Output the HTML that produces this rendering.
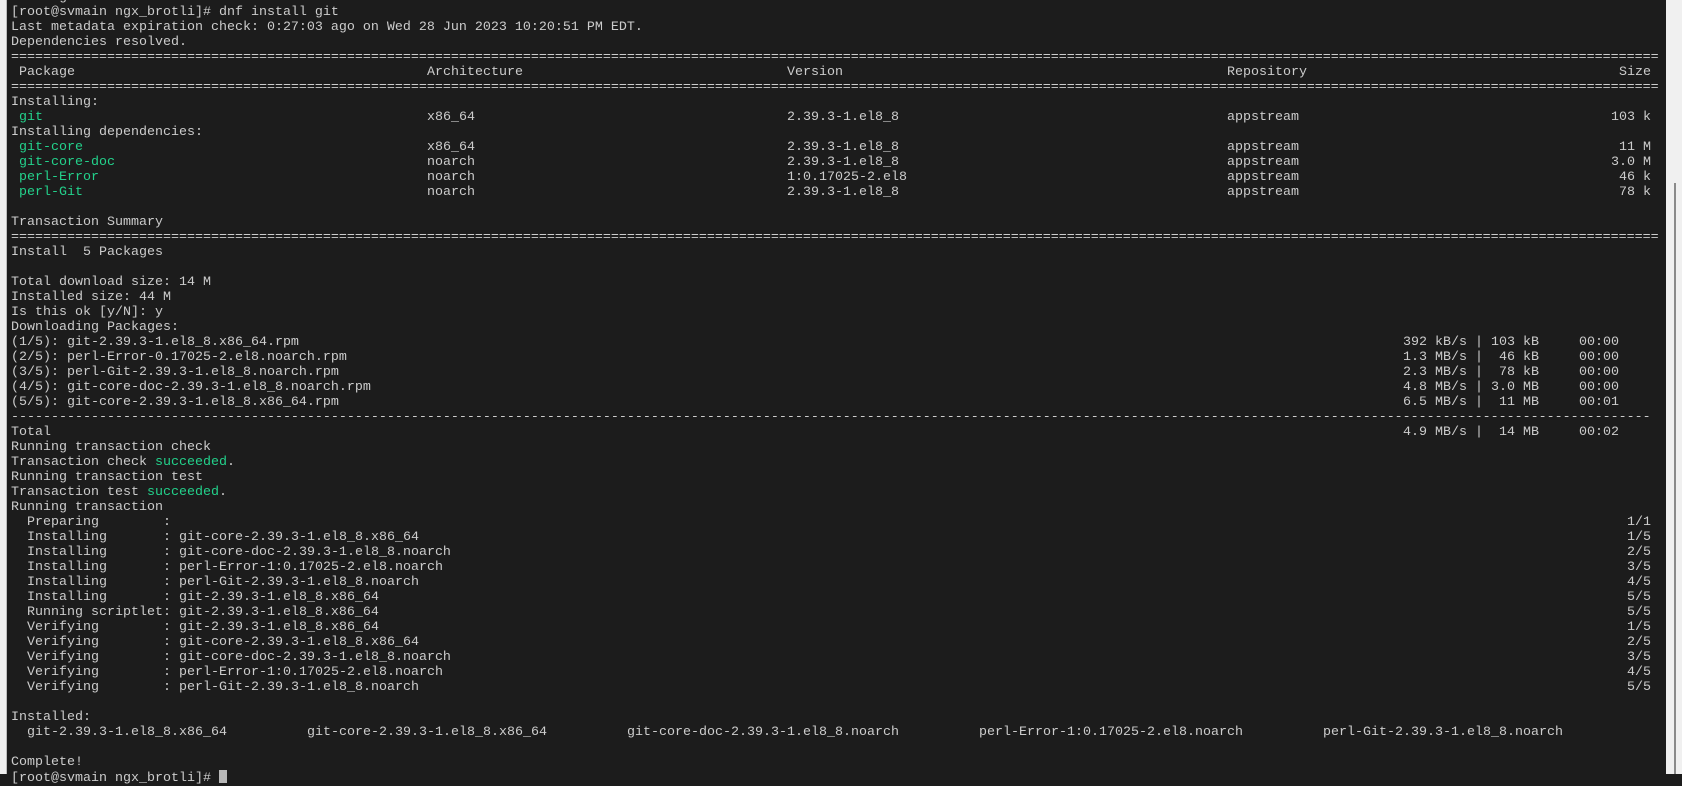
<!DOCTYPE html>
<html><head><meta charset="utf-8"><style>
html,body{margin:0;padding:0;width:1682px;height:774px;overflow:hidden;background:#1c1c1c}
#t{position:absolute;left:0;top:-10.5px;width:1682px;font-family:"Liberation Mono",monospace;font-size:13.33px;color:#cccccc}
.l{position:relative;height:15px;line-height:15px;overflow:visible}
.l span{position:absolute;top:0;white-space:pre}
.g{color:#23d18b}
.y{color:#e5e510}
.r{right:31px}
#lp{position:absolute;left:0;top:0;width:6px;height:774px;background:#f0f0f0;border-right:1px solid #bdbdbd}
#rp{position:absolute;left:1666px;top:0;width:16px;height:774px;background:#f0f0f0}
#sb{position:absolute;left:1674px;top:183px;width:2px;height:591px;background:#8a8a8a}
#cur{display:inline-block;width:8px;height:13px;background:#b8b8b8;vertical-align:-2px}
</style></head><body>
<div id="t"><div class="l"><span style="left:11px">bash: git: <b class="y" style="font-weight:normal">command not found</b></span></div><div class="l"><span style="left:11px">[root@svmain ngx_brotli]# dnf install git</span></div><div class="l"><span style="left:11px">Last metadata expiration check: 0:27:03 ago on Wed 28 Jun 2023 10:20:51 PM EDT.</span></div><div class="l"><span style="left:11px">Dependencies resolved.</span></div><div class="l"><span style="left:11px">==============================================================================================================================================================================================================</span></div><div class="l"><span style="left:19px">Package</span><span style="left:427px">Architecture</span><span style="left:787px">Version</span><span style="left:1227px">Repository</span><span class="r">Size</span></div><div class="l"><span style="left:11px">==============================================================================================================================================================================================================</span></div><div class="l"><span style="left:11px">Installing:</span></div><div class="l"><span style="left:19px" class="g">git</span><span style="left:427px">x86_64</span><span style="left:787px">2.39.3-1.el8_8</span><span style="left:1227px">appstream</span><span class="r">103 k</span></div><div class="l"><span style="left:11px">Installing dependencies:</span></div><div class="l"><span style="left:19px" class="g">git-core</span><span style="left:427px">x86_64</span><span style="left:787px">2.39.3-1.el8_8</span><span style="left:1227px">appstream</span><span class="r">11 M</span></div><div class="l"><span style="left:19px" class="g">git-core-doc</span><span style="left:427px">noarch</span><span style="left:787px">2.39.3-1.el8_8</span><span style="left:1227px">appstream</span><span class="r">3.0 M</span></div><div class="l"><span style="left:19px" class="g">perl-Error</span><span style="left:427px">noarch</span><span style="left:787px">1:0.17025-2.el8</span><span style="left:1227px">appstream</span><span class="r">46 k</span></div><div class="l"><span style="left:19px" class="g">perl-Git</span><span style="left:427px">noarch</span><span style="left:787px">2.39.3-1.el8_8</span><span style="left:1227px">appstream</span><span class="r">78 k</span></div><div class="l"></div><div class="l"><span style="left:11px">Transaction Summary</span></div><div class="l"><span style="left:11px">==============================================================================================================================================================================================================</span></div><div class="l"><span style="left:11px">Install  5 Packages</span></div><div class="l"></div><div class="l"><span style="left:11px">Total download size: 14 M</span></div><div class="l"><span style="left:11px">Installed size: 44 M</span></div><div class="l"><span style="left:11px">Is this ok [y/N]: y</span></div><div class="l"><span style="left:11px">Downloading Packages:</span></div><div class="l"><span style="left:11px">(1/5): git-2.39.3-1.el8_8.x86_64.rpm</span><span style="left:1403px">392 kB/s | 103 kB     00:00</span></div><div class="l"><span style="left:11px">(2/5): perl-Error-0.17025-2.el8.noarch.rpm</span><span style="left:1403px">1.3 MB/s |  46 kB     00:00</span></div><div class="l"><span style="left:11px">(3/5): perl-Git-2.39.3-1.el8_8.noarch.rpm</span><span style="left:1403px">2.3 MB/s |  78 kB     00:00</span></div><div class="l"><span style="left:11px">(4/5): git-core-doc-2.39.3-1.el8_8.noarch.rpm</span><span style="left:1403px">4.8 MB/s | 3.0 MB     00:00</span></div><div class="l"><span style="left:11px">(5/5): git-core-2.39.3-1.el8_8.x86_64.rpm</span><span style="left:1403px">6.5 MB/s |  11 MB     00:01</span></div><div class="l"><span style="left:11px">-------------------------------------------------------------------------------------------------------------------------------------------------------------------------------------------------------------</span></div><div class="l"><span style="left:11px">Total</span><span style="left:1403px">4.9 MB/s |  14 MB     00:02</span></div><div class="l"><span style="left:11px">Running transaction check</span></div><div class="l"><span style="left:11px">Transaction check <b class="g" style="font-weight:normal">succeeded</b>.</span></div><div class="l"><span style="left:11px">Running transaction test</span></div><div class="l"><span style="left:11px">Transaction test <b class="g" style="font-weight:normal">succeeded</b>.</span></div><div class="l"><span style="left:11px">Running transaction</span></div><div class="l"><span style="left:27px">Preparing</span><span style="left:163px">:</span><span class="r">1/1</span></div><div class="l"><span style="left:27px">Installing</span><span style="left:163px">: git-core-2.39.3-1.el8_8.x86_64</span><span class="r">1/5</span></div><div class="l"><span style="left:27px">Installing</span><span style="left:163px">: git-core-doc-2.39.3-1.el8_8.noarch</span><span class="r">2/5</span></div><div class="l"><span style="left:27px">Installing</span><span style="left:163px">: perl-Error-1:0.17025-2.el8.noarch</span><span class="r">3/5</span></div><div class="l"><span style="left:27px">Installing</span><span style="left:163px">: perl-Git-2.39.3-1.el8_8.noarch</span><span class="r">4/5</span></div><div class="l"><span style="left:27px">Installing</span><span style="left:163px">: git-2.39.3-1.el8_8.x86_64</span><span class="r">5/5</span></div><div class="l"><span style="left:27px">Running scriptlet: git-2.39.3-1.el8_8.x86_64</span><span class="r">5/5</span></div><div class="l"><span style="left:27px">Verifying</span><span style="left:163px">: git-2.39.3-1.el8_8.x86_64</span><span class="r">1/5</span></div><div class="l"><span style="left:27px">Verifying</span><span style="left:163px">: git-core-2.39.3-1.el8_8.x86_64</span><span class="r">2/5</span></div><div class="l"><span style="left:27px">Verifying</span><span style="left:163px">: git-core-doc-2.39.3-1.el8_8.noarch</span><span class="r">3/5</span></div><div class="l"><span style="left:27px">Verifying</span><span style="left:163px">: perl-Error-1:0.17025-2.el8.noarch</span><span class="r">4/5</span></div><div class="l"><span style="left:27px">Verifying</span><span style="left:163px">: perl-Git-2.39.3-1.el8_8.noarch</span><span class="r">5/5</span></div><div class="l"></div><div class="l"><span style="left:11px">Installed:</span></div><div class="l"><span style="left:27px">git-2.39.3-1.el8_8.x86_64</span><span style="left:307px">git-core-2.39.3-1.el8_8.x86_64</span><span style="left:627px">git-core-doc-2.39.3-1.el8_8.noarch</span><span style="left:979px">perl-Error-1:0.17025-2.el8.noarch</span><span style="left:1323px">perl-Git-2.39.3-1.el8_8.noarch</span></div><div class="l"></div><div class="l"><span style="left:11px">Complete!</span></div><div class="l"><span style="left:11px">[root@svmain ngx_brotli]# <i id="cur"></i></span></div></div>
<div id="lp"></div>
<div id="rp"></div>
<div id="sb"></div>
</body></html>
